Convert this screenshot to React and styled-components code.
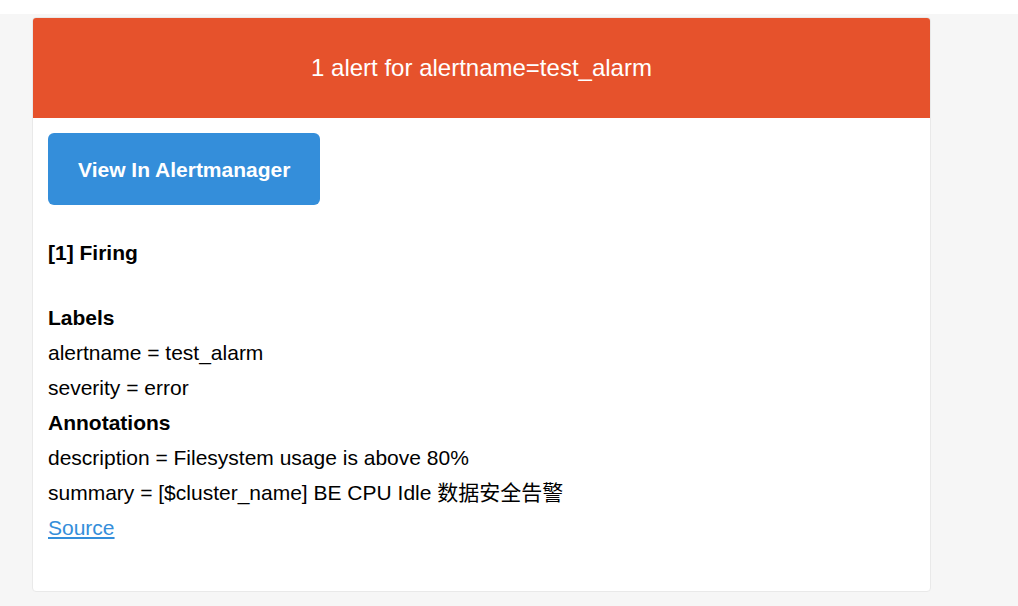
import styled, { createGlobalStyle } from "styled-components";

const Global = createGlobalStyle`
  html, body {
    margin: 0;
    padding: 0;
    background: #f6f6f6;
    font-family: "Liberation Sans", Arial, "Noto Sans CJK SC", sans-serif;
  }
`;

const TopStrip = styled.div`
  height: 14px;
  background: #fff;
`;

const Page = styled.div`
  padding: 3px 0 0 32px;
  min-height: 589px;
  box-sizing: border-box;
`;

const Card = styled.div`
  width: 899px;
  box-sizing: border-box;
  background: #fff;
  border: 1px solid #e9e9e9;
  border-radius: 4px;
  overflow: hidden;
`;

const Header = styled.div`
  height: 100px;
  background: #e6522c;
  color: #fff;
  font-size: 24px;
  display: flex;
  align-items: center;
  justify-content: center;
`;

const Content = styled.div`
  padding: 15px 15px 16px;
  color: #000;
  font-size: 21px;
  line-height: 35px;
`;

const Block = styled.div`
  padding-bottom: 30px;
`;

const ButtonBlock = styled.div`
  display: flex;
  padding-bottom: 30px;
`;

const Button = styled.a`
  display: inline-flex;
  align-items: center;
  justify-content: center;
  height: 72px;
  padding: 0 30px;
  background: #348eda;
  color: #fff;
  font-weight: bold;
  font-size: 21px;
  border-radius: 6px;
  text-decoration: none;
  box-sizing: border-box;
`;

const Strong = styled.div`
  font-weight: bold;
`;

const Line = styled.div``;

const Link = styled.a`
  color: #348eda;
  text-decoration: underline;
`;

const labels = [
  ["alertname", "test_alarm"],
  ["severity", "error"],
];

const annotations = [
  ["description", "Filesystem usage is above 80%"],
  ["summary", "[$cluster_name] BE CPU Idle 数据安全告警"],
];

export default function App() {
  return (
    <>
      <Global />
      <TopStrip />
      <Page>
        <Card>
          <Header>1 alert for alertname=test_alarm</Header>
          <Content>
            <ButtonBlock>
              <Button href="#">View In Alertmanager</Button>
            </ButtonBlock>
            <Block>
              <Strong>[1] Firing</Strong>
            </Block>
            <Block>
              <Strong>Labels</Strong>
              {labels.map(([k, v]) => (
                <Line key={k}>
                  {k} = {v}
                </Line>
              ))}
              <Strong>Annotations</Strong>
              {annotations.map(([k, v]) => (
                <Line key={k}>
                  {k} = {v}
                </Line>
              ))}
              <Link href="#">Source</Link>
            </Block>
          </Content>
        </Card>
      </Page>
    </>
  );
}
